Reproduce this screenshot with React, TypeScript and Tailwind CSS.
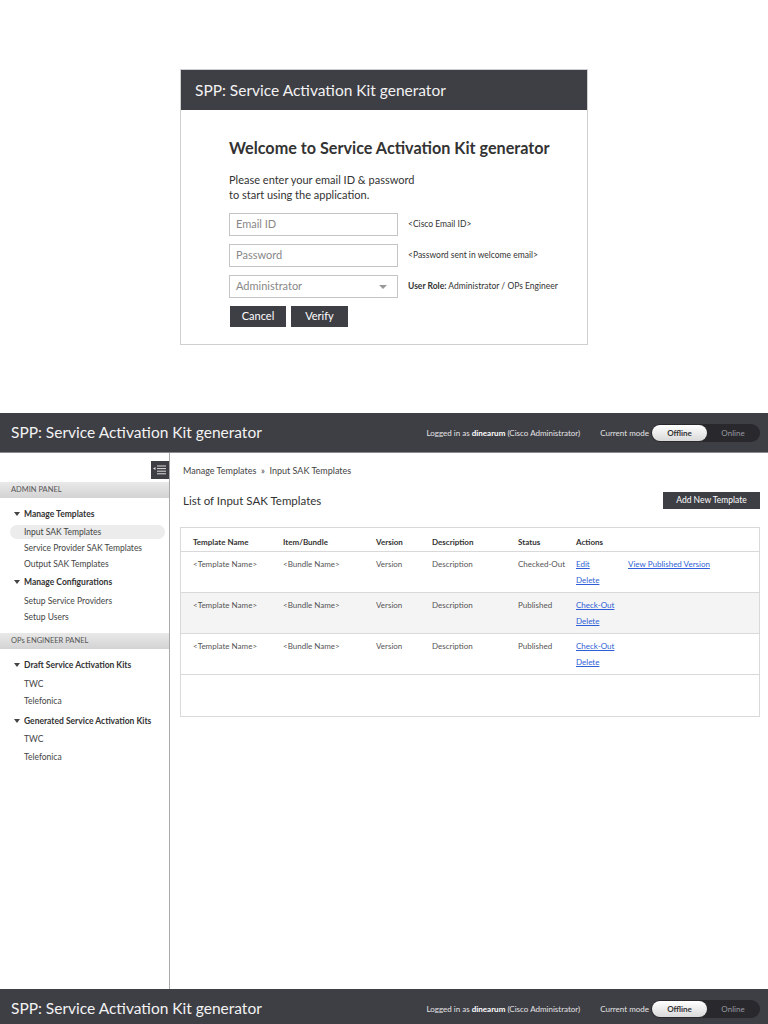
import React from "react";

const font = { fontFamily: "Lato, 'Open Sans', sans-serif" };

const AppHeader = () => (
  <header className="flex h-[40px] items-center justify-between border-b border-[#8a8a8e] bg-[#3e3e45] pl-[11px] pr-[8px]">
    <h1 className="text-[15.5px] text-[#f2f2f2]">SPP: Service Activation Kit generator</h1>
    <div className="flex items-center text-[8px] text-[#e4e4e4]">
      <span>
        Logged in as <b className="font-bold text-white">dinearum</b> (Cisco Administrator)
      </span>
      <span className="ml-[20px] mr-[2px]">Current mode</span>
      <div className="flex h-[18px] w-[109px] items-center rounded-full bg-[#28282d] p-[1px]">
        <div className="flex h-full w-[55px] items-center justify-center rounded-full bg-gradient-to-b from-white to-[#d9d9d9] text-[8px] font-bold text-[#333]">
          Offline
        </div>
        <div className="flex-1 text-center text-[8px] text-[#9a9aa0]">Online</div>
      </div>
    </div>
  </header>
);

const Caret = () => (
  <svg width="6" height="4" viewBox="0 0 6 4" className="mr-[4px]">
    <path d="M0 0h6L3 4z" fill="#444" />
  </svg>
);

const PanelBand = ({ label, className = "" }: { label: string; className?: string }) => (
  <div
    className={`flex h-[16px] items-center bg-gradient-to-b from-[#e9e9e9] to-[#d3d3d3] pl-[11px] text-[7.5px] text-[#555] ${className}`}
  >
    {label}
  </div>
);

const Group = ({ label, className = "" }: { label: string; className?: string }) => (
  <div className={`flex h-[16px] items-center pl-[14px] text-[8.5px] font-bold text-[#333] ${className}`}>
    <Caret />
    {label}
  </div>
);

const Item = ({ label, active, className = "" }: { label: string; active?: boolean; className?: string }) => (
  <div className={`flex h-[16px] items-center ${className}`}>
    <div
      className={`ml-[10px] flex h-[14px] w-[155px] items-center rounded-full pl-[14px] text-[8.5px] text-[#444] ${
        active ? "bg-[#ececec]" : ""
      }`}
    >
      {label}
    </div>
  </div>
);

const Sidebar = () => (
  <aside className="w-[170px] shrink-0 border-r border-[#aaa] pt-[8px]">
    <div className="flex justify-end">
      <div className="flex h-[18px] w-[18px] items-center justify-center bg-[#3e3e45]">
        <svg width="14" height="10" viewBox="0 0 14 10">
          <path d="M0 3.5L2.5 2v3z" fill="#ddd" />
          <path d="M4 1h9M4 3.6h9M4 6.2h9M4 8.8h9" stroke="#ddd" strokeWidth="1" />
        </svg>
      </div>
    </div>
    <PanelBand label="ADMIN PANEL" className="mt-[3px]" />
    <Group label="Manage Templates" className="mt-[8px]" />
    <Item label="Input SAK Templates" active className="mt-[2px]" />
    <Item label="Service Provider SAK Templates" />
    <Item label="Output SAK Templates" />
    <Group label="Manage Configurations" className="mt-[2px]" />
    <Item label="Setup Service Providers" className="mt-[3px]" />
    <Item label="Setup Users" />
    <PanelBand label="OPs ENGINEER PANEL" className="mt-[8px]" />
    <Group label="Draft Service Activation Kits" className="mt-[8px]" />
    <Item label="TWC" className="mt-[3px]" />
    <Item label="Telefonica" className="mt-[1px]" />
    <Group label="Generated Service Activation Kits" className="mt-[4px]" />
    <Item label="TWC" className="mt-[2px]" />
    <Item label="Telefonica" className="mt-[2px]" />
  </aside>
);

type Row = { status: string; actions: string[]; extra?: string; gray?: boolean };

const rows: Row[] = [
  { status: "Checked-Out", actions: ["Edit", "Delete"], extra: "View Published Version" },
  { status: "Published", actions: ["Check-Out", "Delete"], gray: true },
  { status: "Published", actions: ["Check-Out", "Delete"] },
];

const cols = "grid grid-cols-[90px_93px_56px_86px_58px_52px_1fr] pl-[12px]";

const Link = ({ children }: { children: React.ReactNode }) => (
  <span className="text-[8px] leading-[16px] text-[#2f5fd6] underline">{children}</span>
);

const TemplatesTable = () => (
  <div className="mr-[8px] mt-[18px] h-[190px] border border-[#d9d9d9]">
    <div className={`${cols} h-[24px] items-center border-b border-[#d9d9d9] pt-[4px] text-[8px] font-bold text-[#333]`}>
      <span>Template Name</span>
      <span>Item/Bundle</span>
      <span>Version</span>
      <span>Description</span>
      <span>Status</span>
      <span>Actions</span>
      <span />
    </div>
    {rows.map((r, i) => (
      <div
        key={i}
        className={`${cols} h-[41px] border-b border-[#d9d9d9] pt-[4px] text-[8px] leading-[16px] text-[#555] ${
          r.gray ? "bg-[#f4f4f4]" : ""
        }`}
      >
        <span>&lt;Template Name&gt;</span>
        <span>&lt;Bundle Name&gt;</span>
        <span>Version</span>
        <span>Description</span>
        <span>{r.status}</span>
        <div className="flex flex-col items-start">
          {r.actions.map((a) => (
            <Link key={a}>{a}</Link>
          ))}
        </div>
        <div>{r.extra && <Link>{r.extra}</Link>}</div>
      </div>
    ))}
  </div>
);

const Login = () => (
  <div className="flex h-[413px] justify-center pt-[69px]">
    <div className="h-[276px] w-[408px] border border-[#cfcfcf]">
      <div className="flex h-[40px] items-center bg-[#3e3e45] pl-[14px] pt-[2px] text-[15.5px] text-[#f2f2f2]">
        SPP: Service Activation Kit generator
      </div>
      <div className="pl-[48px] pt-[28px]">
        <h2 className="text-[16.2px] font-bold leading-[20px] text-[#333]">
          Welcome to Service Activation Kit generator
        </h2>
        <p className="mt-[14px] text-[11px] leading-[15px] text-[#333]">
          Please enter your email ID &amp; password
          <br />
          to start using the application.
        </p>
        <div className="mt-[11px] flex flex-col gap-[8px]">
          {[
            { ph: "Email ID", hint: <>&lt;Cisco Email ID&gt;</> },
            { ph: "Password", hint: <>&lt;Password sent in welcome email&gt;</> },
            {
              ph: "Administrator",
              select: true,
              hint: (
                <>
                  <b className="font-bold">User Role:</b> Administrator / OPs Engineer
                </>
              ),
            },
          ].map((f) => (
            <div key={f.ph} className="flex items-center">
              <div className="flex h-[23px] w-[169px] items-center justify-between border border-[#c4c4c4] px-[6px] text-[11px] text-[#888]">
                <span>{f.ph}</span>
                {f.select && (
                  <svg width="8" height="4" viewBox="0 0 8 4" className="mr-[4px]">
                    <path d="M0 0h8L4 4z" fill="#999" />
                  </svg>
                )}
              </div>
              <span className="ml-[10px] text-[8.5px] text-[#333]">{f.hint}</span>
            </div>
          ))}
        </div>
        <div className="mt-[8px] flex gap-[5px] pl-[1px]">
          <button className="h-[21px] w-[56px] bg-[#3e3e45] text-[11px] text-white">Cancel</button>
          <button className="h-[21px] w-[57px] bg-[#3e3e45] text-[11px] text-white">Verify</button>
        </div>
      </div>
    </div>
  </div>
);

export default function App() {
  return (
    <div className="min-h-[1024px] bg-white" style={font}>
      <Login />
      <AppHeader />
      <div className="flex h-[536px]">
        <Sidebar />
        <main className="flex-1 pl-[10px] pt-[12px]">
          <div className="pl-[3px] text-[9px] leading-[12px] text-[#444]">
            Manage Templates&nbsp;&nbsp;»&nbsp;&nbsp;Input SAK Templates
          </div>
          <div className="mr-[8px] mt-[15px] flex h-[17px] items-center justify-between">
            <h3 className="pl-[3px] text-[11.5px] text-[#333]">List of Input SAK Templates</h3>
            <button className="h-[17px] w-[97px] bg-[#3e3e45] text-[8.5px] text-white">Add New Template</button>
          </div>
          <TemplatesTable />
        </main>
      </div>
      <AppHeader />
    </div>
  );
}
